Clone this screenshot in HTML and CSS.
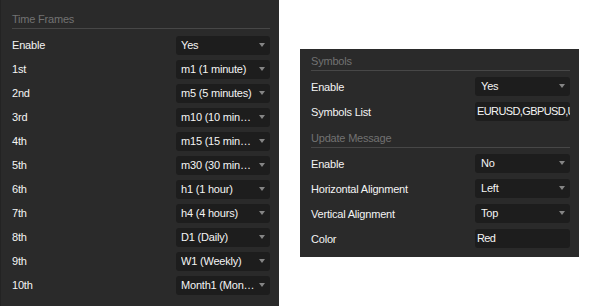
FILE: index.html
```html
<!DOCTYPE html>
<html lang="en">
<head>
    <meta charset="UTF-8">
    <title>Settings</title>
    <link rel="stylesheet" href="styles.css">
</head>
<body>

    <div class="page">
        <!-- Time frames panel -->
        <div class="panel panel-frames">
            <div class="section-title">Time Frames</div>
            <div class="rows">
                <div class="row"><span class="label">Enable</span><div class="field select"><span>Yes</span></div></div>
                <div class="row"><span class="label">1st</span><div class="field select"><span>m1 (1 minute)</span></div></div>
                <div class="row"><span class="label">2nd</span><div class="field select"><span>m5 (5 minutes)</span></div></div>
                <div class="row"><span class="label">3rd</span><div class="field select"><span>m10 (10 minutes)</span></div></div>
                <div class="row"><span class="label">4th</span><div class="field select"><span>m15 (15 minutes)</span></div></div>
                <div class="row"><span class="label">5th</span><div class="field select"><span>m30 (30 minutes)</span></div></div>
                <div class="row"><span class="label">6th</span><div class="field select"><span>h1 (1 hour)</span></div></div>
                <div class="row"><span class="label">7th</span><div class="field select"><span>h4 (4 hours)</span></div></div>
                <div class="row"><span class="label">8th</span><div class="field select"><span>D1 (Daily)</span></div></div>
                <div class="row"><span class="label">9th</span><div class="field select"><span>W1 (Weekly)</span></div></div>
                <div class="row"><span class="label">10th</span><div class="field select"><span>Month1 (Monthly)</span></div></div>
            </div>
        </div>

        <!-- Symbols / update message panel -->
        <div class="panel panel-symbols">
            <div class="section-title">Symbols</div>
            <div class="rows">
                <div class="row"><span class="label">Enable</span><div class="field select"><span>Yes</span></div></div>
                <div class="row"><span class="label">Symbols List</span><div class="field input"><span>EURUSD,GBPUSD,USDJPY,AUDUSD</span></div></div>
            </div>
            <div class="section-title">Update Message</div>
            <div class="rows">
                <div class="row"><span class="label">Enable</span><div class="field select"><span>No</span></div></div>
                <div class="row"><span class="label">Horizontal Alignment</span><div class="field select"><span>Left</span></div></div>
                <div class="row"><span class="label">Vertical Alignment</span><div class="field select"><span>Top</span></div></div>
                <div class="row"><span class="label">Color</span><div class="field input"><span>Red</span></div></div>
            </div>
        </div>
    </div>

</body>
</html>
```

FILE: styles.css
```css
body {
    margin: 0;
    background-color: #fff;
    font-family: "Liberation Sans", Arial, sans-serif;
    font-size: 11px;
    letter-spacing: -0.2px;
    color: #f4f4f4;
}
.page {
    display: flex;
    align-items: flex-start;
    height: 306px;
}
.panel {
    box-sizing: border-box;
    width: 279px;
    background-color: #2a2a2a;
    padding-right: 9px;
}
.panel-frames {
    height: 306px;
    padding-top: 10px;
    padding-left: 11px;
    border-left: 1px solid #232323;
}
.panel-symbols {
    height: 208px;
    margin-top: 49px;
    margin-left: 21px;
    padding-top: 3px;
    padding-left: 11px;
}
.section-title {
    height: 18px;
    line-height: 18px;
    color: #727272;
    border-bottom: 1px solid #474747;
}
.panel-symbols .rows + .section-title {
    margin-top: 5px;
}
.rows {
    display: flex;
    flex-direction: column;
    margin-top: 4px;
}
.panel-symbols .rows {
    margin-top: 3px;
}
.row {
    display: flex;
    align-items: center;
    justify-content: space-between;
    height: 24px;
}
.panel-symbols .row {
    height: 25px;
}
.field {
    position: relative;
    box-sizing: border-box;
    width: 94px;
    height: 19px;
    line-height: 19px;
    background-color: #1d1d1d;
    border-radius: 3px;
    white-space: nowrap;
    overflow: hidden;
}
.panel-symbols .field {
    width: 95px;
}
.field span {
    display: block;
    overflow: hidden;
}
.select {
    padding: 0 15px 0 5px;
}
.panel-symbols .select {
    padding-left: 6px;
}
.select span {
    text-overflow: ellipsis;
}
/* dropdown arrow */
.select::after {
    content: "";
    position: absolute;
    top: 7px;
    right: 5px;
    border-left: 3px solid transparent;
    border-right: 3px solid transparent;
    border-top: 4px solid #858585;
}
.input {
    padding-left: 2px;
    letter-spacing: -0.6px;
}
```
